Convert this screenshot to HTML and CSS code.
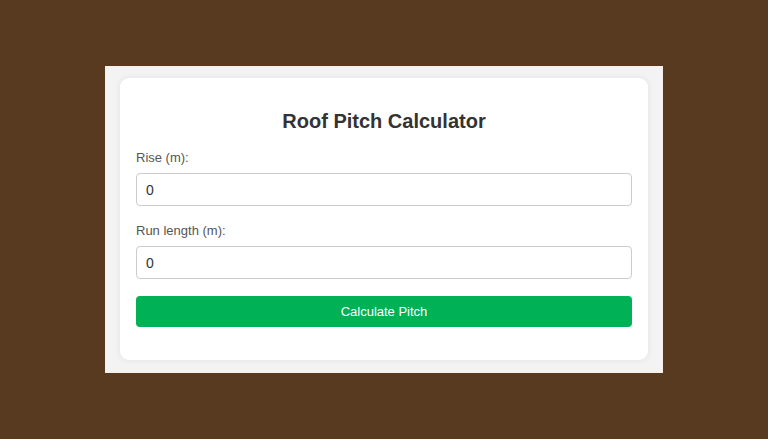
FILE: index.html
```html
<!DOCTYPE html>
<html>
<head>
<meta charset="utf-8">
<link rel="stylesheet" href="styles.css">
</head>
<body>
<div class="frame">
  <div class="card">
    <h2 class="title">Roof Pitch Calculator</h2>
    <label class="label" for="rise">Rise (m):</label>
    <input class="field" id="rise" type="number" value="0">
    <label class="label" for="run">Run length (m):</label>
    <input class="field" id="run" type="number" value="0">
    <button class="btn" type="button">Calculate Pitch</button>
  </div>
</div>
</body>
</html>
```
FILE: styles.css
```css
* { box-sizing: border-box; }
html, body { height: 100%; }
body {
  margin: 0;
  background: #583a21;
  display: flex;
  align-items: center;
  justify-content: center;
  font-family: "Liberation Sans", Arial, sans-serif;
}
.frame {
  width: 558px;
  height: 307px;
  background: #f3f3f3;
  padding: 12px 15px 13px;
  box-shadow: inset 0 0 0 1px #f7efe6;
}
.card {
  background: #fff;
  border-radius: 9px;
  box-shadow: 0 0 6px rgba(0,0,0,0.08);
  height: 282px;
  padding: 16px 16px 33px;
  display: flex;
  flex-direction: column;
}
.title {
  margin: 16px 0 17px;
  font-size: 20px;
  line-height: 23px;
  font-weight: bold;
  color: #333;
  text-align: center;
}
.label {
  display: block;
  font-size: 13px;
  line-height: 15px;
  color: #555;
  margin-bottom: 8px;
}
.field {
  height: 33px;
  width: 100%;
  border: 1px solid #ccc;
  border-radius: 4px;
  padding: 0 9px;
  font-family: "Liberation Sans", Arial, sans-serif;
  font-size: 14px;
  color: #333;
  margin: 0 0 17px;
  background: #fff;
  outline: none;
}
.btn {
  height: 31px;
  width: 100%;
  border: none;
  border-radius: 4px;
  background: #00b156;
  color: #fff;
  font-family: "Liberation Sans", Arial, sans-serif;
  font-size: 13px;
  padding: 0;
}
```
